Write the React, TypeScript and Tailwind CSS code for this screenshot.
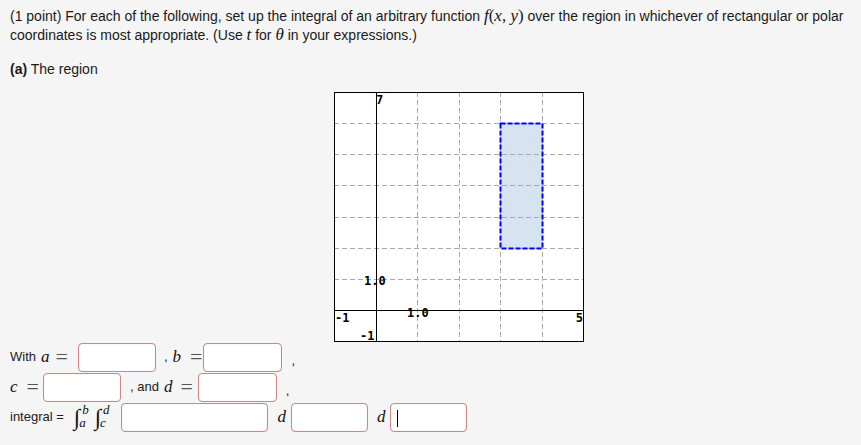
import React from 'react'

const W = 249
const X = (x: number) => Math.round((x + 1) * (W / 6)) + 0.5
const Y = (y: number) => Math.round((7 - y) * (W / 8)) + 0.5

function M({ children, className = '' }: { children: React.ReactNode; className?: string }) {
  return <span className={`font-['Liberation_Serif',serif] italic text-[17px] text-[#111] ${className}`}>{children}</span>
}

function Eq({ className = '' }: { className?: string }) {
  return <span className={`font-['Liberation_Serif',serif] text-[22px] text-[#555] leading-none ${className}`}>=</span>
}

function Box({ w, caret }: { w: number; caret?: boolean }) {
  return (
    <div className="relative h-[29px] shrink-0 rounded-[4px] border border-[#d08585] bg-white shadow-[inset_0_0_1px_#f0c0c0]" style={{ width: w }}>
      {caret && <div className="absolute left-[6px] top-[6px] h-[17px] w-px bg-black" />}
    </div>
  )
}

function Int({ lo, hi }: { lo: string; hi: string }) {
  return (
    <span className="inline-flex items-center font-['Liberation_Serif',serif] italic text-[#111]">
      <span className="text-[23px] leading-none">∫</span>
      <span className="flex flex-col text-[13px] leading-[11px] ml-[2px]">
        <span className="-mt-[3px]">{hi}</span>
        <span className="-ml-[3px] mt-[2px]">{lo}</span>
      </span>
    </span>
  )
}

function Graph() {
  const mono = { fontFamily: '"DejaVu Sans Mono", "Liberation Mono", monospace', fontWeight: 700, fontSize: 12 }
  return (
    <svg width={250} height={250} className="block">
      <rect x={0.5} y={0.5} width={W} height={W} fill="#fff" />
      <rect x={X(3)} y={Y(6)} width={X(4) - X(3)} height={Y(2) - Y(6)} fill="#d6e4f2" />
      {[1, 2, 3, 4].map(x => (
        <line key={'v' + x} x1={X(x)} x2={X(x)} y1={0} y2={W} stroke="#aaaaaa" strokeDasharray="5 3" />
      ))}
      {[1, 2, 3, 4, 5, 6].map(y => (
        <line key={'h' + y} x1={0} x2={W} y1={Y(y)} y2={Y(y)} stroke="#aaaaaa" strokeDasharray="5 3" />
      ))}
      <line x1={X(0)} x2={X(0)} y1={0} y2={W} stroke="#000" />
      <line x1={0} x2={W} y1={Y(0)} y2={Y(0)} stroke="#000" />
      <rect x={X(3)} y={Y(6)} width={X(4) - X(3)} height={Y(2) - Y(6)} fill="none" stroke="#0000ff" strokeWidth={2} strokeDasharray="5 2" />
      <rect x={0.5} y={0.5} width={W} height={W} fill="none" stroke="#000" />
      <text x={42} y={12} style={mono}>7</text>
      <text x={30} y={193} style={mono}>1.0</text>
      <text x={73} y={225} style={mono}>1.0</text>
      <text x={1} y={230} style={mono}>-1</text>
      <text x={249} y={230} textAnchor="end" style={mono}>5</text>
      <text x={26} y={248} style={mono}>-1</text>
    </svg>
  )
}

export default function App() {
  return (
    <div className="min-h-[445px] w-[861px] bg-[#f5f5f5] pl-[10px] pt-[7px] font-['Liberation_Sans',Arial,sans-serif] text-[13px] text-[#1a1a1a]">
      <div className="whitespace-nowrap text-[14px] leading-[18px]">
        (1 point) For each of the following, set up the integral of an arbitrary function{' '}
        <M>f</M><span className="font-['Liberation_Serif',serif] text-[17px]">(</span><M>x</M>
        <span className="font-['Liberation_Serif',serif] text-[17px]">, </span><M>y</M>
        <span className="font-['Liberation_Serif',serif] text-[17px]">)</span> over the region in whichever of rectangular or polar
      </div>
      <div className="whitespace-nowrap text-[14px] leading-[18px] mt-px">
        coordinates is most appropriate. (Use <M>t</M> for <M>θ</M> in your expressions.)
      </div>
      <div className="mt-[16px] text-[14px] leading-[18px]">
        <b>(a)</b> The region
      </div>

      <div className="ml-[324px] mt-[14px]">
        <Graph />
      </div>

      <div className="flex h-[30px] items-center">
        <span>With</span>
        <M className="ml-[5px]">a</M>
        <Eq className="ml-[6px]" />
        <span className="ml-[10px]" />
        <Box w={78} />
        <span className="ml-[8px]">,</span>
        <M className="ml-[5px]">b</M>
        <Eq className="ml-[9px]" />
        <span className="ml-[1px]" />
        <Box w={79} />
        <span className="ml-[9px] self-end mb-[2px]">,</span>
      </div>

      <div className="flex h-[30px] items-center">
        <M>c</M>
        <Eq className="ml-[9px]" />
        <span className="ml-[4px]" />
        <Box w={78} />
        <span className="ml-[9px]">, and</span>
        <M className="ml-[5px]">d</M>
        <Eq className="ml-[8px]" />
        <span className="ml-[5px]" />
        <Box w={79} />
        <span className="ml-[9px] self-end mb-[2px]">,</span>
      </div>

      <div className="flex h-[30px] items-center">
        <span>integral =</span>
        <span className="ml-[10px]" />
        <Int lo="a" hi="b" />
        <span className="ml-[6px]" />
        <Int lo="c" hi="d" />
        <span className="ml-[12px]" />
        <Box w={147} />
        <M className="ml-[9px] mr-[5px]">d</M>
        <Box w={77} />
        <M className="ml-[9px] mr-[5px]">d</M>
        <Box w={77} caret />
      </div>
    </div>
  )
}
